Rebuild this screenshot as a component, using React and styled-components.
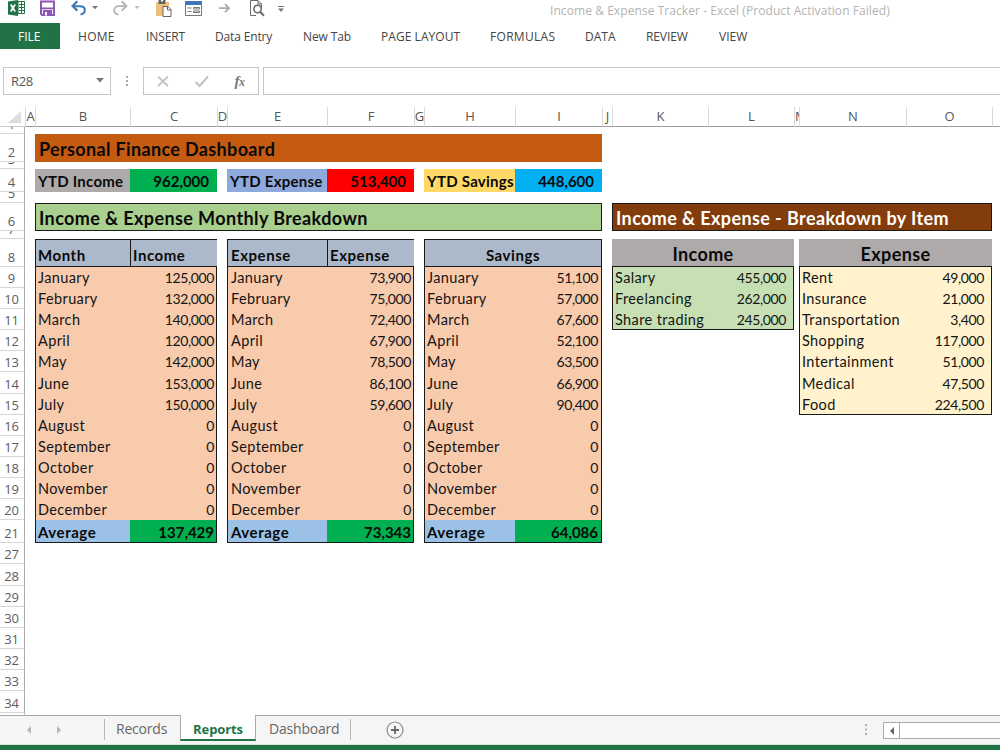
import React from "react";
import styled, { createGlobalStyle } from "styled-components";

const GlobalStyle = createGlobalStyle`
  body {
    margin: 0;
    background: #fff;
    font-family: "Open Sans", "Noto Sans", sans-serif;
    overflow: hidden;
  }
  * {
    box-sizing: border-box;
  }
`;

const Window = styled.div`
  display: flex;
  flex-direction: column;
  width: 1000px;
  height: 750px;
  overflow: hidden;
  background: #fff;
`;

/* ---------- title bar ---------- */

const TitleBar = styled.header`
  display: flex;
  height: 23px;
`;

const QuickAccess = styled.div`
  display: flex;
  width: 550px;
`;

const Icon = styled.svg`
  display: block;
  flex: none;
  margin-left: ${(p) => p.$gap || 0}px;
`;

const WindowTitle = styled.div`
  font-size: 12px;
  line-height: 21px;
  letter-spacing: 0.07px;
  white-space: nowrap;
  color: #b3b3b3;
`;

/* ---------- ribbon ---------- */

const Ribbon = styled.nav`
  display: grid;
  grid-template-columns: 60px 18px 68px 69px 88px 78px 109px 95px 61px 73px 80px;
  height: 27px;
`;

const FileTab = styled.div`
  height: 26px;
  background: #217346;
  color: #fff;
  font-size: 12px;
  line-height: 27px;
  padding-left: 18px;
`;

const RibbonTab = styled.div`
  font-size: 12px;
  line-height: 27px;
  letter-spacing: ${(p) => p.$track || 0}px;
  color: #444;
  white-space: nowrap;
`;

/* ---------- formula bar ---------- */

const FormulaBar = styled.div`
  display: flex;
  height: 57px;
  padding: 17px 0 12px 3px;
`;

const NameBox = styled.div`
  display: flex;
  align-items: center;
  justify-content: space-between;
  width: 108px;
  border: 1px solid #c6c6c6;
  padding: 0 6px 0 7px;
  font-size: 13px;
  letter-spacing: -0.3px;
  color: #555;
`;

const FormulaTools = styled.div`
  display: flex;
  width: 116px;
  border: 1px solid #c6c6c6;
`;

const FormulaInput = styled.div`
  flex: 1;
  margin-left: 4px;
  border: 1px solid #c6c6c6;
  border-right: 0;
`;

/* ---------- sheet ---------- */

const Sheet = styled.main`
  display: grid;
  height: 608px;
  grid-template-columns:
    25px 10px 95px 87px 10px 100px 87px 10px 91px 87px 10px 96px 86px 5px
    107px 86px 8px;
  grid-template-rows:
    20px 7px 28px 7px 23px 11px 28px 8px 28px
    21px 21px 21px 21px 21px 22px 21px 21px 21px 21px 21px 21px 23px
    21px 22px 21px 21px 21px 21px 21px 22px 2px;
`;

const Corner = styled.div`
  grid-column: 1;
  grid-row: 1;
  border-bottom: 1px solid #c8c8c8;
`;

const ColumnHeader = styled.div`
  grid-row: 1;
  grid-column: ${(p) => p.$col};
  display: flex;
  justify-content: ${(p) => (p.$narrow ? "flex-start" : "center")};
  overflow: hidden;
  border-left: 1px solid #dadada;
  border-bottom: 1px solid #9c9c9c;
  font-size: 13px;
  line-height: 18px;
  color: #555;
`;

const RowHeader = styled.div`
  grid-column: 1;
  grid-row: ${(p) => p.$row};
  display: flex;
  align-items: flex-end;
  justify-content: center;
  overflow: hidden;
  padding-right: 1px;
  border-right: 1px solid #ababab;
  border-bottom: 1px solid ${(p) => (p.$last ? "transparent" : "#d6d6d6")};
  font-size: 13px;
  line-height: 18px;
  letter-spacing: -0.1px;
  color: #5c5c5c;
`;

const line = (on) => (on ? "1px solid #1a1a1a" : "0");

const Cell = styled.div`
  grid-column: ${(p) => p.$col} / span ${(p) => p.$span || 1};
  grid-row: ${(p) => p.$row};
  display: flex;
  align-items: flex-end;
  justify-content: ${(p) => p.$align || "flex-start"};
  min-width: 0;
  padding-left: ${(p) => (p.$edges?.includes("l") ? 2 : 3) + (p.$indent || 0)}px;
  padding-right: ${(p) => (p.$edges?.includes("r") ? 2 : 3)}px;
  padding-bottom: ${(p) => (p.$edges?.includes("b") ? 0 : 1)}px;
  background: ${(p) => p.$bg};
  border-left: ${(p) => line(p.$edges?.includes("l"))};
  border-top: ${(p) => line(p.$edges?.includes("t"))};
  border-right: ${(p) => line(p.$edges?.includes("r"))};
  border-bottom: ${(p) => line(p.$edges?.includes("b"))};
  font-family: Lato, "Open Sans", sans-serif;
  font-size: 14.5px;
  line-height: 19px;
  letter-spacing: 0.38px;
  white-space: nowrap;
  color: #141414;
`;

const NumberCell = styled(Cell)`
  justify-content: flex-end;
  font-size: 14px;
  letter-spacing: -0.38px;
  padding-right: ${(p) => p.$inset || 2}px;
`;

const BoldCell = styled(Cell)`
  font-size: 15px;
  font-weight: 700;
  letter-spacing: ${(p) => p.$track ?? 0.55}px;
  color: #0a0a0a;
`;

const HeadCell = styled(BoldCell)`
  padding-bottom: 1px;
`;

const BoldNumber = styled(BoldCell)`
  justify-content: flex-end;
  letter-spacing: 0;
  padding-right: ${(p) => p.$inset || 2}px;
`;

const Banner = styled(Cell)`
  align-items: center;
  padding: 2px 0 0 ${(p) => (p.$edges ? 3 : 4)}px;
  font-size: 18px;
  font-weight: 700;
  letter-spacing: ${(p) => p.$track || 0}px;
  color: ${(p) => p.$color || "#0a0a0a"};
`;

const GroupTitle = styled(Cell)`
  align-items: center;
  justify-content: center;
  padding: 3px 0 0 0;
  font-size: 18px;
  font-weight: 700;
  color: #0a0a0a;
`;

/* ---------- sheet tabs ---------- */

const TabStrip = styled.footer`
  display: flex;
  height: 30px;
  border-top: 1px solid #a6a6a6;
  border-bottom: 1px solid #d8e4dc;
  background: #f5f5f5;
`;

const Arrows = styled.div`
  display: flex;
  align-items: center;
  width: 104px;
  padding-left: 26px;
`;

const Divider = styled.div`
  width: 1px;
  height: 21px;
  margin-top: 3px;
  background: #b5b5b5;
`;

const SheetTab = styled.div`
  width: ${(p) => p.$width}px;
  padding-left: ${(p) => p.$pad}px;
  font-size: 14px;
  line-height: 26px;
  letter-spacing: -0.2px;
  color: #666;
`;

const ActiveTab = styled.div`
  width: 76px;
  height: 26px;
  margin-top: -1px;
  border: 1px solid #ababab;
  border-top: 0;
  border-bottom: 2px solid #217346;
  background: #fff;
  color: #217346;
  font-size: 13px;
  font-weight: 700;
  line-height: 28px;
  letter-spacing: -0.1px;
  text-align: center;
`;

const ScrollBar = styled.div`
  display: flex;
  width: 117px;
  height: 17px;
  margin: 6px 0 0 auto;
  border: 1px solid #ababab;
  border-right: 0;
  background: #fff;
`;

const ScrollButton = styled.div`
  display: flex;
  align-items: center;
  justify-content: center;
  width: 16px;
  border-right: 1px solid #ababab;
`;

const StatusBar = styled.div`
  height: 5px;
  background: #217346;
`;

/* ---------- data ---------- */

const ribbonTabs = [
  ["HOME", 0.3],
  ["INSERT", -0.1],
  ["Data Entry", -0.15],
  ["New Tab", -0.1],
  ["PAGE LAYOUT", 0.05],
  ["FORMULAS", 0.3],
  ["DATA", 0],
  ["REVIEW", -0.1],
  ["VIEW", 0],
];

const columns = "ABCDEFGHIJKLMNO".split("");
const rowLabels = [
  1, 2, 3, 4, 5, 6, 7, 8, 9, 10, 11, 12, 13, 14, 15, 16, 17, 18, 19, 20, 21,
  27, 28, 29, 30, 31, 32, 33, 34, "",
];

const months = [
  "January",
  "February",
  "March",
  "April",
  "May",
  "June",
  "July",
  "August",
  "September",
  "October",
  "November",
  "December",
];

const zeros = ["0", "0", "0", "0", "0"];

const monthly = [
  {
    col: 3,
    head: ["Month", "Income"],
    values: ["125,000", "132,000", "140,000", "120,000", "142,000", "153,000", "150,000", ...zeros],
    average: "137,429",
  },
  {
    col: 6,
    indent: 1,
    head: ["Expense", "Expense"],
    values: ["73,900", "75,000", "72,400", "67,900", "78,500", "86,100", "59,600", ...zeros],
    average: "73,343",
  },
  {
    col: 9,
    head: ["Savings"],
    values: ["51,100", "57,000", "67,600", "52,100", "63,500", "66,900", "90,400", ...zeros],
    average: "64,086",
    inset: 3,
  },
];

const totals = [
  { col: 3, label: "YTD Income", value: "962,000", bg: "#aeaaaa", valueBg: "#00b050" },
  { col: 6, label: "YTD Expense", value: "513,400", bg: "#8ea9db", valueBg: "#ff0000" },
  { col: 9, label: "YTD Savings", value: "448,600", bg: "#ffd966", valueBg: "#00b0f0" },
];

const groups = [
  {
    col: 12,
    title: "Income",
    bg: "#c6e0b4",
    items: [
      ["Salary", "455,000"],
      ["Freelancing", "262,000"],
      ["Share trading", "245,000"],
    ],
  },
  {
    col: 15,
    title: "Expense",
    bg: "#fff2cc",
    items: [
      ["Rent", "49,000"],
      ["Insurance", "21,000"],
      ["Transportation", "3,400"],
      ["Shopping", "117,000"],
      ["Intertainment", "51,000"],
      ["Medical", "47,500"],
      ["Food", "224,500"],
    ],
  },
];

/* ---------- components ---------- */

function Toolbar() {
  return (
    <QuickAccess>
      <Icon $gap={8} width="17" height="17" viewBox="0 0 17 17">
        <path d="M10 1.5h6.5v12H10z" fill="#fff" stroke="#217346" />
        <path d="M11 4.5h5M11 7.5h5M11 10.5h5M13.5 2v11" stroke="#217346" />
        <path d="M0 1.5 10 0v16L0 14.5z" fill="#217346" />
        <path d="m2.7 4.5 4.4 7M7.1 4.5l-4.4 7" stroke="#fff" strokeWidth="1.7" />
      </Icon>
      <Icon $gap={15} width="15" height="17" viewBox="0 0 15 17">
        <path d="M1 1.5h13v13.6H2.2L1 13.9z" fill="#fff" stroke="#8e55b5" strokeWidth="2" />
        <path d="M1 7.5h13v1.8H1zM3 10h9v5H3z" fill="#8e55b5" />
        <path d="M5 12h2v3.5H5z" fill="#fff" />
      </Icon>
      <Icon $gap={16} width="15" height="17" viewBox="0 0 15 17" fill="none">
        <path d="M2 6.2h7c3 0 4.8 1.7 4.8 4 0 2.2-1.8 3.8-4.3 4.3" stroke="#3b78b8" strokeWidth="2" />
        <path d="M6.3 1.2 1.6 6l4.7 4.6" stroke="#3b78b8" strokeWidth="2.2" />
      </Icon>
      <Icon $gap={6} width="6" height="17" viewBox="0 0 6 17">
        <path d="M0 6h6L3 9.3z" fill="#777" />
      </Icon>
      <Icon $gap={15} width="15" height="17" viewBox="0 0 15 17" fill="none">
        <path d="M13 6.2H6c-3 0-4.8 1.7-4.8 4 0 2.2 1.8 3.8 4.3 4.3" stroke="#b5b5b5" strokeWidth="1.8" />
        <path d="m8.7 1.2 4.7 4.8-4.7 4.6" stroke="#b5b5b5" strokeWidth="2" />
      </Icon>
      <Icon $gap={6} width="6" height="17" viewBox="0 0 6 17">
        <path d="M.5 6h5L3 9z" fill="#bbb" />
      </Icon>
      <Icon $gap={15} width="17" height="18" viewBox="0 0 17 18">
        <path d="M1 2h13v14H1z" fill="#eebf79" />
        <path d="M3.5 0h7v4h-7z" fill="#666" />
        <path d="M6 0h2v1.5H6z" fill="#fff" />
        <path d="M8 6.5h5l3 3v7H8z" fill="#fff" stroke="#666" />
        <path d="M12.5 6.5V10H16" fill="none" stroke="#666" />
      </Icon>
      <Icon $gap={13} width="17" height="17" viewBox="0 0 17 17">
        <path d="M.5 1.5h16v14H.5z" fill="#fff" stroke="#777" />
        <path d="M0 1h17v4H0z" fill="#3b78b8" />
        <path d="M2.5 8h4M2.5 11.5h4" stroke="#777" />
        <path d="M8.500 7.500h6v1.500h-6zM8.500 11h6v1.500h-6z" fill="#fff" stroke="#777" />
      </Icon>
      <Icon $gap={17} width="11" height="17" viewBox="0 0 11 17" fill="none">
        <path d="M0 8.2h10M6 4.2l4 4-4 4" stroke="#aaa" strokeWidth="1.8" />
      </Icon>
      <Icon $gap={19} width="16" height="18" viewBox="0 0 16 18" fill="none">
        <path d="M7 15.5H1.5v-15H9L12.500 4v4" stroke="#6a6a6a" />
        <path d="M9 .5V4h3.500" stroke="#6a6a6a" />
        <circle cx="8.5" cy="9" r="3.7" stroke="#6a6a6a" strokeWidth="1.5" />
        <path d="m11 11.8 4 4" stroke="#6a6a6a" strokeWidth="2" />
      </Icon>
      <Icon $gap={13} width="6" height="17" viewBox="0 0 6 17">
        <path d="M0 6h6v1H0zM0 8.500h6L3 12z" fill="#777" />
      </Icon>
    </QuickAccess>
  );
}

function MonthlyTable({ table }) {
  const { col, indent, head, values, average, inset } = table;
  return (
    <>
      {head.length === 2 ? (
        <>
          <HeadCell $col={col} $row={9} $bg="#acb9ca" $edges="ltb" $indent={indent}>
            {head[0]}
          </HeadCell>
          <HeadCell $col={col + 1} $row={9} $bg="#acb9ca" $edges="ltb">
            {head[1]}
          </HeadCell>
        </>
      ) : (
        <HeadCell $col={col} $span={2} $row={9} $bg="#acb9ca" $edges="ltrb" $align="center">
          {head[0]}
        </HeadCell>
      )}
      {values.map((value, i) => (
        <React.Fragment key={months[i]}>
          <Cell $col={col} $row={10 + i} $bg="#f8cbad" $edges="l" $indent={indent}>
            {months[i]}
          </Cell>
          <NumberCell $col={col + 1} $row={10 + i} $bg="#f8cbad" $edges="r" $inset={inset}>
            {value}
          </NumberCell>
        </React.Fragment>
      ))}
      <BoldCell $col={col} $row={22} $bg="#9bc2e6" $edges="lb" $indent={indent}>
        Average
      </BoldCell>
      <BoldNumber $col={col + 1} $row={22} $bg="#00b050" $edges="rb" $inset={inset}>
        {average}
      </BoldNumber>
    </>
  );
}

function ItemGroup({ group }) {
  const { col, title, bg, items } = group;
  return (
    <>
      <GroupTitle $col={col} $span={2} $row={9} $bg="#aeaaaa" $edges="b">
        {title}
      </GroupTitle>
      {items.map(([name, value], i) => {
        const bottom = i === items.length - 1 ? "b" : "";
        return (
          <React.Fragment key={name}>
            <Cell $col={col} $row={10 + i} $bg={bg} $edges={"l" + bottom}>
              {name}
            </Cell>
            <NumberCell $col={col + 1} $row={10 + i} $bg={bg} $edges={"r" + bottom} $inset={7}>
              {value}
            </NumberCell>
          </React.Fragment>
        );
      })}
    </>
  );
}

function App() {
  return (
    <Window>
      <GlobalStyle />
      <TitleBar>
        <Toolbar />
        <WindowTitle>
          Income &amp; Expense Tracker - Excel (Product Activation Failed)
        </WindowTitle>
      </TitleBar>

      <Ribbon>
        <FileTab>FILE</FileTab>
        <span />
        {ribbonTabs.map(([label, track]) => (
          <RibbonTab key={label} $track={track}>
            {label}
          </RibbonTab>
        ))}
      </Ribbon>

      <FormulaBar>
        <NameBox>
          R28
          <Icon width="8" height="8" viewBox="0 0 8 8">
            <path d="M0 1h8L4 5.5z" fill="#777" />
          </Icon>
        </NameBox>
        <Icon $gap={15} width="2" height="28" viewBox="0 0 2 28">
          <path d="M0 9h2v2H0zM0 13h2v2H0zM0 17h2v2H0z" fill="#aaa" />
        </Icon>
        <Icon width="15" height="1" />
        <FormulaTools>
          <Icon width="114" height="26" viewBox="0 0 114 26" fill="none">
            <path d="m14 8.5 10 9.5M24 8.5 14 18" stroke="#c4c4c4" strokeWidth="1.8" />
            <path d="m51.5 14 4 4L64 8.5" stroke="#c4c4c4" strokeWidth="2.2" />
            <text x="90.500" y="17.500" fontFamily="Liberation Serif, serif" fontSize="15" fontStyle="italic" fontWeight="700" fill="#777">f</text>
            <text x="95" y="18" fontFamily="Liberation Serif, serif" fontSize="12" fontStyle="italic" fontWeight="700" fill="#777">x</text>
          </Icon>
        </FormulaTools>
        <FormulaInput />
      </FormulaBar>

      <Sheet>
        <Corner>
          <Icon width="25" height="19" viewBox="0 0 25 19">
            <path d="M21 4v12H8z" fill="#dcdcdc" />
          </Icon>
        </Corner>
        {columns.map((name, i) => (
          <ColumnHeader key={name} $col={i + 2} $narrow={name === "M"}>
            {name}
          </ColumnHeader>
        ))}
        <ColumnHeader $col={17} />
        {rowLabels.map((label, i) => (
          <RowHeader key={i} $row={i + 2} $last={label === ""}>
            {label}
          </RowHeader>
        ))}

        <Banner $col={3} $span={8} $row={3} $bg="#c55a11" $track={0.35}>
          Personal Finance Dashboard
        </Banner>
        {totals.map((t) => (
          <React.Fragment key={t.label}>
            <BoldCell $col={t.col} $row={5} $bg={t.bg} $track={0.25}>
              {t.label}
            </BoldCell>
            <BoldNumber $col={t.col + 1} $row={5} $bg={t.valueBg} $inset={8}>
              {t.value}
            </BoldNumber>
          </React.Fragment>
        ))}
        <Banner $col={3} $span={8} $row={7} $bg="#a9d08e" $edges="ltrb" $track={0.4}>
          Income &amp; Expense Monthly Breakdown
        </Banner>
        <Banner $col={12} $span={5} $row={7} $bg="#833c0c" $edges="ltrb" $color="#fff" $track={0.4}>
          Income &amp; Expense - Breakdown by Item
        </Banner>

        {monthly.map((table) => (
          <MonthlyTable key={table.col} table={table} />
        ))}
        {groups.map((group) => (
          <ItemGroup key={group.col} group={group} />
        ))}
      </Sheet>

      <TabStrip>
        <Arrows>
          <Icon width="36" height="10" viewBox="0 0 36 10">
            <path d="M5 1v8L1 5zM31 1v8l4-4z" fill="#b5b5b5" />
          </Icon>
        </Arrows>
        <Divider />
        <SheetTab $width={75} $pad={11}>
          Records
        </SheetTab>
        <ActiveTab>Reports</ActiveTab>
        <SheetTab $width={94} $pad={13}>
          Dashboard
        </SheetTab>
        <Divider />
        <Icon $gap={34} width="20" height="28" viewBox="0 0 20 28" fill="none">
          <circle cx="10" cy="14" r="8" stroke="#8a8a8a" strokeWidth="1.2" />
          <path d="M10 10v8M6 14h8" stroke="#666" strokeWidth="1.8" />
        </Icon>
        <Icon $gap={460} width="2" height="28" viewBox="0 0 2 28">
          <path d="M0 8h2v2H0zM0 12.500h2v2H0zM0 17h2v2H0z" fill="#b0b0b0" />
        </Icon>
        <ScrollBar>
          <ScrollButton>
            <Icon width="4" height="8" viewBox="0 0 4 8">
              <path d="M4 0v8L0 4z" fill="#666" />
            </Icon>
          </ScrollButton>
        </ScrollBar>
      </TabStrip>
      <StatusBar />
    </Window>
  );
}

export default App;
